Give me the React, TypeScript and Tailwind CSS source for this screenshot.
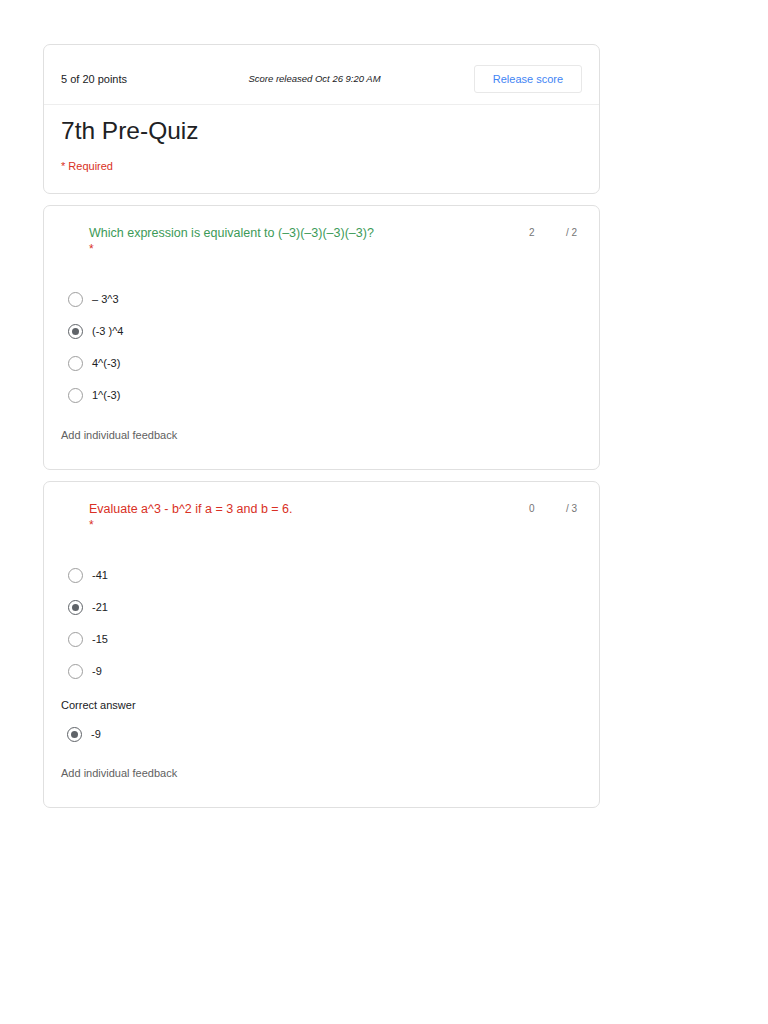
import { ReactNode } from 'react'

type Option = { label: string; checked?: boolean }

function Radio({ checked }: { checked?: boolean }) {
  return checked ? (
    <span className="flex h-[15px] w-[15px] items-center justify-center rounded-full border-[1.5px] border-[#5f6368]">
      <span className="h-[7px] w-[7px] rounded-full bg-[#5f6368]" />
    </span>
  ) : (
    <span className="h-[15px] w-[15px] rounded-full border-[1.5px] border-[#9e9e9e]" />
  )
}

function OptionRow({ label, checked }: Option) {
  return (
    <div className="flex h-[32px] items-center gap-[9px] pl-[24px]">
      <Radio checked={checked} />
      <span className="text-[11px] text-[#202124]">{label}</span>
    </div>
  )
}

function Card({ children }: { children: ReactNode }) {
  return <section className="w-[557px] rounded-[7px] border border-[#e0e0e0] bg-white">{children}</section>
}

function QuestionHead({ text, color, score, total }: { text: string; color: string; score: string; total: string }) {
  return (
    <div className="flex items-start justify-between pl-[45px] pr-[22px] pt-[19px]">
      <div className="leading-[16px]">
        <p className={`text-[12.5px] ${color}`}>{text}</p>
        <p className="h-[16px] text-[12px] text-[#d93025]">*</p>
      </div>
      <div className="flex w-[48px] justify-between text-[10px] leading-[16px] text-[#757575]">
        <span>{score}</span>
        <span>/ {total}</span>
      </div>
    </div>
  )
}

function Feedback() {
  return <p className="pl-[17px] text-[11px] leading-[16px] text-[#616161]">Add individual feedback</p>
}

export default function App() {
  const q1: Option[] = [{ label: '– 3^3' }, { label: '(-3 )^4', checked: true }, { label: '4^(-3)' }, { label: '1^(-3)' }]
  const q2: Option[] = [{ label: '-41' }, { label: '-21', checked: true }, { label: '-15' }, { label: '-9' }]

  return (
    <main className="min-h-[1024px] bg-white pl-[43px] pt-[44px] font-['Liberation_Sans',Arial,sans-serif]">
      <div className="flex flex-col gap-[11px]">
        <Card>
          <div className="flex items-center justify-between border-b border-[#eeeeee] px-[17px] pb-[11px] pt-[20px]">
            <span className="text-[11px] text-[#202124]">5 of 20 points</span>
            <span className="ml-[28px] text-[9.5px] italic text-[#202124]">Score released Oct 26 9:20 AM</span>
            <button className="h-[28px] w-[108px] rounded-[3px] border border-[#e8e8e8] text-[11px] text-[#4285f4]">
              Release score
            </button>
          </div>
          <div className="px-[17px] pb-[19px] pt-[12px]">
            <h1 className="text-[24.5px] leading-[28px] text-[#202124]">7th Pre-Quiz</h1>
            <p className="mt-[13px] text-[11px] leading-[16px] text-[#d93025]">* Required</p>
          </div>
        </Card>

        <Card>
          <QuestionHead text="Which expression is equivalent to (–3)(–3)(–3)(–3)?" color="text-[#3c9a57]" score="2" total="2" />
          <div className="mt-[26px]">
            {q1.map((o) => (
              <OptionRow key={o.label} {...o} />
            ))}
          </div>
          <div className="mt-[16px] pb-[26px]">
            <Feedback />
          </div>
        </Card>

        <Card>
          <QuestionHead text="Evaluate a^3 - b^2 if a = 3 and b = 6." color="text-[#d93025]" score="0" total="3" />
          <div className="mt-[26px]">
            {q2.map((o) => (
              <OptionRow key={o.label} {...o} />
            ))}
          </div>
          <p className="mt-[10px] pl-[17px] text-[11px] leading-[16px] text-[#202124]">Correct answer</p>
          <div className="mt-[5px] -ml-px">
            <OptionRow label="-9" checked />
          </div>
          <div className="mt-[15px] pb-[26px]">
            <Feedback />
          </div>
        </Card>
      </div>
    </main>
  )
}
